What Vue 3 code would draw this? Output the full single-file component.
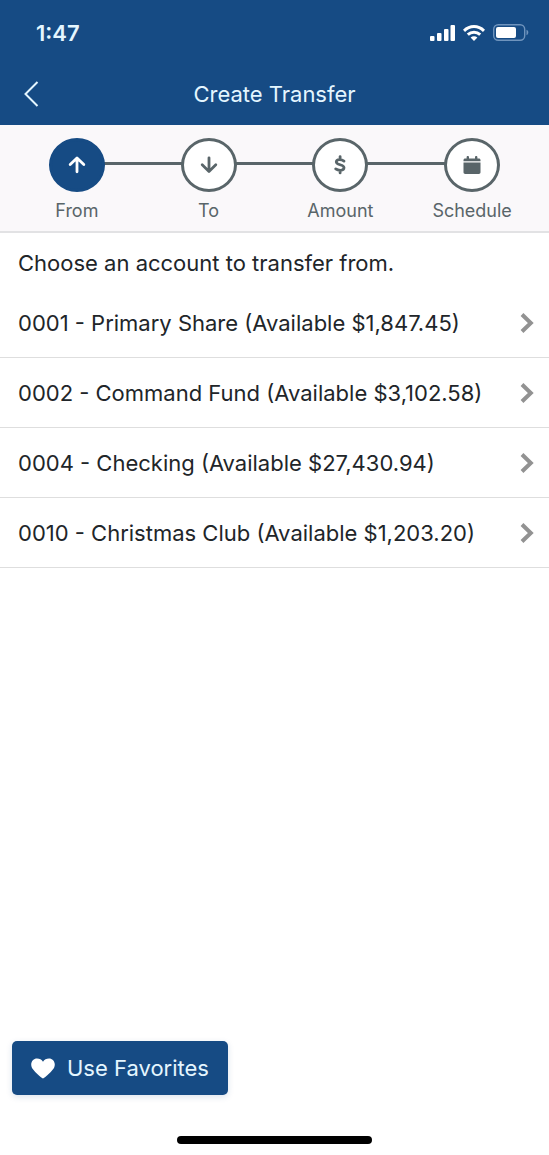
<template>
  <div class="screen">
    <header class="top">
      <div class="status-bar">
        <span class="clock">1:47</span>
        <div class="status-icons">
          <svg width="25" height="16" viewBox="0 0 25 16" aria-hidden="true">
            <g fill="#fff">
              <rect x="0" y="11" width="4.5" height="5" rx="1" />
              <rect x="7" y="8" width="4.5" height="8" rx="1" />
              <rect x="14" y="4" width="4.5" height="12" rx="1" />
              <rect x="20.5" y="0" width="4.5" height="16" rx="1" />
            </g>
          </svg>
          <svg width="22" height="16" viewBox="0 0 22 16" aria-hidden="true">
            <g fill="none" stroke="#fff" stroke-width="3">
              <path d="M1 5.8C6.8.2 15.2.2 21 5.8" />
              <path d="M4.8 9.7c3.6-3.3 8.8-3.3 12.4 0" />
            </g>
            <path d="M7.6 12.4c2-1.7 4.8-1.7 6.8 0L11 16z" fill="#fff" />
          </svg>
          <svg width="36" height="17" viewBox="0 0 36 17" aria-hidden="true">
            <rect x="0.7" y="0.7" width="31" height="15.6" rx="4.5" fill="none" stroke="#6f94bd" stroke-width="1.4" />
            <rect x="3" y="3" width="20" height="11" rx="2" fill="#fff" />
            <path d="M33.5 5.8c2.4.8 2.4 4.6 0 5.4z" fill="#6f94bd" />
          </svg>
        </div>
      </div>
      <div class="nav-bar">
        <button class="back" type="button" aria-label="Back">
          <svg width="15" height="26" viewBox="0 0 15 26" fill="none" stroke="#e4f6ff" stroke-width="2">
            <path d="M13.5 1L1.5 13l12 12" />
          </svg>
        </button>
        <h1 class="title">Create Transfer</h1>
      </div>
    </header>

    <ol class="steps">
      <li
        v-for="(step, index) in steps"
        :key="step.label"
        :class="['step', { active: index === current }]"
      >
        <span class="step-circle">
          <svg width="20" height="20" viewBox="0 0 20 20" aria-hidden="true">
            <g v-if="step.icon === 'up'" class="stroke">
              <path d="M10 16.8V3.2M3.2 9.6L10 3l6.8 6.6" />
            </g>
            <g v-else-if="step.icon === 'down'" class="stroke">
              <path d="M10 2.8v13.4M3.2 9.8l6.8 6.6 6.8-6.6" />
            </g>
            <g v-else-if="step.icon === 'dollar'" class="stroke">
              <path d="M14 6.1C12.2 4.7 6.6 3.4 6.3 6.9c-.2 3.3 7.7 2.4 7.7 5.7 0 3.9-6.1 3-8.3 1.3M10.1 1.6V4M10.1 15.3v2.6" />
            </g>
            <g v-else class="solid">
              <path d="M5.8 1c.7 0 1.2.5 1.2 1.2v1.2h6V2.200c0-.7.5-1.200 1.200-1.200s1.200.5 1.200 1.200v1.200h1.400c1 0 1.700.7 1.700 1.700v1.100h-17V5.100c0-1 .7-1.700 1.700-1.700h1.400V2.200c0-.7.5-1.200 1.200-1.200z" />
              <path d="M1.500 7.500h17v9.700c0 1-.7 1.700-1.700 1.700H3.200c-1 0-1.700-.7-1.700-1.700z" />
            </g>
          </svg>
        </span>
        <span class="step-label">{{ step.label }}</span>
      </li>
    </ol>

    <main class="content">
      <p class="prompt">Choose an account to transfer from.</p>
      <ul class="accounts">
        <li v-for="account in accounts" :key="account.id">
          <button class="account" type="button">
            <span>{{ account.id }} - {{ account.name }} (Available {{ account.available }})</span>
            <svg class="chevron" width="14" height="20" viewBox="0 0 14 20" aria-hidden="true">
              <path d="M2 1.5l8.8 8.5L2 18.5" />
            </svg>
          </button>
        </li>
      </ul>
    </main>

    <footer class="bottom">
      <button class="favorites" type="button">
        <svg width="24" height="21" viewBox="0 0 24 21" aria-hidden="true">
          <path d="M12 20.5C10.5 20.5 1.5 11.8.7 9.3-1 4.5 2 .5 6 .5c2.6 0 4.7 1.2 6 3.2C13.3 1.7 15.4.5 18 .5c4 0 7 4 5.3 8.8-.8 2.5-9.800 11.200-11.300 11.200z" fill="#fff" />
        </svg>
        <span>Use Favorites</span>
      </button>
      <div class="home-indicator"></div>
    </footer>
  </div>
</template>

<script setup>
import { ref } from 'vue';

const current = ref(0);

const steps = [
  { label: 'From', icon: 'up' },
  { label: 'To', icon: 'down' },
  { label: 'Amount', icon: 'dollar' },
  { label: 'Schedule', icon: 'calendar' }
];

const accounts = [
  { id: '0001', name: 'Primary Share', available: '$1,847.45' },
  { id: '0002', name: 'Command Fund', available: '$3,102.58' },
  { id: '0004', name: 'Checking', available: '$27,430.94' },
  { id: '0010', name: 'Christmas Club', available: '$1,203.20' }
];
</script>

<style>
body {
  margin: 0;
  background: #fff;
}
</style>

<style scoped>
.screen {
  display: flex;
  flex-direction: column;
  min-height: 100vh;
  font-family: Inter, "Liberation Sans", sans-serif;
  font-size: 22px;
  color: #212529;
}
button {
  border: none;
  background: none;
  padding: 0;
  font: inherit;
  color: inherit;
  cursor: pointer;
}
.top {
  background: #164b84;
  color: #e4f6ff;
}
.status-bar {
  display: flex;
  align-items: center;
  justify-content: space-between;
  height: 65px;
  padding: 0 20px 0 36px;
}
.clock {
  font-weight: 600;
}
.status-icons {
  display: flex;
  align-items: center;
  gap: 8px;
}
.nav-bar {
  display: grid;
  grid-template-columns: 64px 1fr 64px;
  align-items: center;
  height: 58px;
  padding-bottom: 2px;
}
.back {
  display: flex;
  padding-left: 24px;
}
.title {
  margin: 0;
  font-size: 22px;
  font-weight: 400;
  text-align: center;
}

.steps {
  display: grid;
  grid-template-columns: repeat(4, 1fr);
  margin: 0;
  padding: 13px 11px 8px;
  list-style: none;
  background: #faf8fa;
  border-bottom: 2px solid #e2e2e4;
}
.step {
  position: relative;
  display: flex;
  flex-direction: column;
  align-items: center;
  gap: 7px;
  color: #596569;
}
.step + .step::before {
  content: "";
  position: absolute;
  top: 24px;
  right: 50%;
  width: 100%;
  height: 3px;
  background: #596569;
}
.step-circle {
  position: relative;
  z-index: 1;
  display: flex;
  align-items: center;
  justify-content: center;
  box-sizing: border-box;
  width: 56px;
  height: 54px;
  border: 3px solid #596569;
  border-radius: 50%;
  background: #fff;
}
/* the circle of each step covers the line that comes from the next one */
.step:nth-child(1) { z-index: 4; }
.step:nth-child(2) { z-index: 3; }
.step:nth-child(3) { z-index: 2; }
.step:nth-child(4) { z-index: 1; }
.active .step-circle {
  border-color: #164b84;
  background: #164b84;
  color: #fff;
}
.stroke {
  fill: none;
  stroke: currentColor;
  stroke-width: 2.8;
  stroke-linecap: round;
  stroke-linejoin: round;
}
.solid { fill: currentColor; }
.step-label {
  font-size: 18px;
  line-height: 24px;
}

.content { flex: 1; }
.prompt {
  margin: 0;
  padding: 15px 18px 10px;
  line-height: 30px;
}
.accounts {
  margin: 0;
  padding: 0;
  list-style: none;
}
.account {
  display: flex;
  align-items: center;
  justify-content: space-between;
  box-sizing: border-box;
  width: 100%;
  min-height: 70px;
  padding: 0 15px 0 18px;
  border-bottom: 1px solid #dedede;
  text-align: left;
}
.chevron {
  flex-shrink: 0;
  fill: none;
  stroke: #929292;
  stroke-width: 4;
}

.bottom {
  display: flex;
  flex-direction: column;
  padding: 0 12px 11px;
}
.favorites {
  display: flex;
  align-items: center;
  align-self: flex-start;
  gap: 12px;
  height: 54px;
  margin-bottom: 41px;
  padding: 0 19px;
  border-radius: 5px;
  background: #164b84;
  color: #e4f6ff;
  box-shadow: 0 2px 6px rgba(22, 75, 132, 0.15);
}
.home-indicator {
  align-self: center;
  width: 37%;
  height: 8px;
  border-radius: 4px;
  background: #000;
}
</style>
